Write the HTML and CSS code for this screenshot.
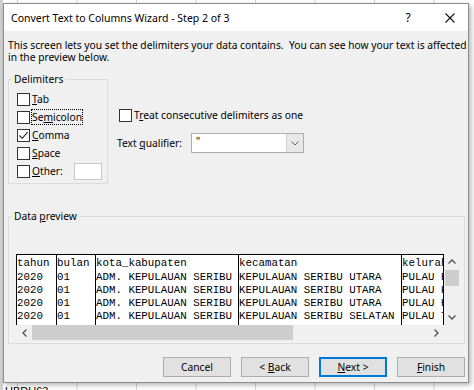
FILE: index.html
```html
<!DOCTYPE html>
<html lang="en">
<head>
  <meta charset="UTF-8" />
  <title>Convert Text to Columns Wizard - Step 2 of 3</title>
  <link rel="stylesheet" href="styles.css">
</head>
<body>
  <div class="dialog">
    <div class="titlebar">
      <span class="title">Convert Text to Columns Wizard - Step 2 of 3</span>
      <span class="help">?</span>
      <svg class="close" width="10" height="10" viewBox="0 0 10 10">
        <path d="M0.5 0.5 L9.5 9.5 M9.5 0.5 L0.5 9.5" stroke="#111" stroke-width="1.1" fill="none"/>
      </svg>
    </div>

    <div class="content">
      <p class="intro">This screen lets you set the delimiters your data contains.&nbsp; You can see how your text is affected<br>in the preview below.</p>

      <div class="options">
        <fieldset class="delims">
          <legend>Delimiters</legend>
          <div class="group-body">
            <label class="check"><span class="box"></span><span><u>T</u>ab</span></label>
            <label class="check"><span class="box"></span><span class="focus">Se<u>m</u>icolon</span></label>
            <label class="check">
              <span class="box">
                <svg width="11" height="11" viewBox="0 0 11 11"><path d="M1.5 5.5 L4.2 8.3 L9.6 2.2" stroke="#333" stroke-width="1.2" fill="none"/></svg>
              </span>
              <span><u>C</u>omma</span>
            </label>
            <label class="check"><span class="box"></span><span><u>S</u>pace</span></label>
            <label class="check"><span class="box"></span><span><u>O</u>ther:</span><span class="other-input"></span></label>
          </div>
        </fieldset>

        <div class="side">
          <label class="check treat"><span class="box"></span><span>T<u>r</u>eat consecutive delimiters as one</span></label>
          <div class="qualifier">
            <span class="qualifier-label">Text <u>q</u>ualifier:</span>
            <div class="combo">
              <span class="combo-value">"</span>
              <span class="combo-arrow">
                <svg width="8" height="5" viewBox="0 0 8 5"><path d="M0.5 0.5 L4 4 L7.5 0.5" stroke="#606060" stroke-width="1" fill="none"/></svg>
              </span>
            </div>
          </div>
        </div>
      </div>

      <fieldset class="preview-group">
        <legend>Data <u>p</u>review</legend>
        <div class="group-body preview-body">
          <div class="preview">
            <div class="grid">
              <div class="col col1">
                <div class="head">tahun</div><div>2020</div><div>2020</div><div>2020</div><div>2020</div>
              </div>
              <div class="col col2">
                <div class="head">bulan</div><div>01</div><div>01</div><div>01</div><div>01</div>
              </div>
              <div class="col col3">
                <div class="head">kota_kabupaten</div><div>ADM. KEPULAUAN SERIBU</div><div>ADM. KEPULAUAN SERIBU</div><div>ADM. KEPULAUAN SERIBU</div><div>ADM. KEPULAUAN SERIBU</div>
              </div>
              <div class="col col4">
                <div class="head">kecamatan</div><div>KEPULAUAN SERIBU UTARA</div><div>KEPULAUAN SERIBU UTARA</div><div>KEPULAUAN SERIBU UTARA</div><div>KEPULAUAN SERIBU SELATAN</div>
              </div>
              <div class="col col5">
                <div class="head">kelurahan</div><div>PULAU PANGGANG</div><div>PULAU KELAPA</div><div>PULAU HARAPAN</div><div>PULAU TIDUNG</div>
              </div>
            </div>

            <div class="vscroll">
              <span class="arrow">
                <svg width="8" height="5" viewBox="0 0 8 5"><path d="M0.5 4.5 L4 1 L7.5 4.5" stroke="#505050" stroke-width="1.3" fill="none"/></svg>
              </span>
              <span class="vthumb"></span>
              <span class="spacer"></span>
              <span class="arrow">
                <svg width="8" height="5" viewBox="0 0 8 5"><path d="M0.5 0.5 L4 4 L7.5 0.5" stroke="#505050" stroke-width="1.3" fill="none"/></svg>
              </span>
            </div>

            <div class="hscroll">
              <span class="arrow">
                <svg width="5" height="8" viewBox="0 0 5 8"><path d="M4.5 0.5 L1 4 L4.5 7.5" stroke="#505050" stroke-width="1.3" fill="none"/></svg>
              </span>
              <span class="hthumb"></span>
              <span class="spacer"></span>
              <span class="arrow">
                <svg width="5" height="8" viewBox="0 0 5 8"><path d="M0.5 0.5 L4 4 L0.5 7.5" stroke="#505050" stroke-width="1.3" fill="none"/></svg>
              </span>
            </div>
            <div class="corner"></div>
          </div>
        </div>
      </fieldset>

      <div class="buttons">
        <button class="btn">Cancel</button>
        <button class="btn">&lt; <u>B</u>ack</button>
        <button class="btn default"><u>N</u>ext &gt;</button>
        <button class="btn"><u>F</u>inish</button>
      </div>
    </div>
  </div>
  <div class="sheet-cell">HBDU63</div>
</body>
</html>
```

FILE: styles.css
```css
body {
  margin: 0;
  padding: 3px 5px 0 3px;
  height: 390px;
  box-sizing: border-box;
  overflow: hidden;
  font-family: "Noto Sans", "Open Sans", sans-serif;
  font-size: 10.25px;
  color: #000;
  background-color: #fff;
  background-image: linear-gradient(#cfcfcf, #cfcfcf), linear-gradient(90deg, #d4d4d4 1px, transparent 1px);
  background-size: 3px 100%, 59.5px 100%;
  background-position: 0 0, 17px 0;
  background-repeat: no-repeat, repeat-x;
}

/* Dialog frame */
.dialog {
  width: 466px;
  height: 380px;
  box-sizing: border-box;
  border: 1px solid #8c8c8c;
  background: #f0f0f0;
  box-shadow: 2px 2px 5px rgba(0, 0, 0, 0.3);
  display: flex;
  flex-direction: column;
}
.titlebar {
  height: 27px;
  flex: none;
  background: #fff;
  display: flex;
  align-items: center;
  padding-left: 7px;
  font-size: 10.5px;
}
.title {
  flex: 1;
}
.help {
  width: 14px;
  text-align: center;
  margin-right: 30px;
  font-size: 12px;
}
.close {
  margin-right: 13px;
}

.content {
  flex: 1;
  display: flex;
  flex-direction: column;
  padding: 0 3px 0 4px;
}
.intro {
  margin: 8px 0 0;
  line-height: 12px;
  white-space: nowrap;
}

/* Group boxes */
fieldset {
  margin: 0;
  padding: 0;
  border: 1px solid #dcdcdc;
  min-width: 0;
}
legend {
  padding: 0 2px;
  margin-left: 3px;
  line-height: 14px;
}
.options {
  display: flex;
  gap: 9px;
  margin-top: 9px;
}
.delims {
  width: 100px;
  box-sizing: border-box;
}
.group-body {
  padding: 4px 5px 3px 8px;
}

/* Checkboxes */
.check {
  display: flex;
  align-items: center;
  height: 18px;
  white-space: nowrap;
}
.box {
  width: 13px;
  height: 13px;
  box-sizing: border-box;
  border: 1px solid #333;
  background: #fff;
  margin-right: 2px;
  flex: none;
  display: flex;
  align-items: center;
  justify-content: center;
}
.focus {
  outline: 1px dotted #000;
}
.other-input {
  margin-left: auto;
  width: 28px;
  height: 17px;
  box-sizing: border-box;
  border: 1px solid #c8c8c8;
  background: #fff;
}

.side {
  padding-top: 34px;
}
.treat {
  padding-left: 2px;
}
.qualifier {
  display: flex;
  align-items: center;
  margin-top: 9px;
  height: 20px;
}
.qualifier-label {
  width: 74px;
}
.combo {
  width: 113px;
  height: 20px;
  box-sizing: border-box;
  border: 1px solid #adadad;
  background: #fff;
  display: flex;
}
.combo-value {
  padding-left: 4px;
  line-height: 14px;
}
.combo-arrow {
  margin-left: auto;
  width: 16px;
  background: #e8e8e8;
  border-left: 1px solid #d0d0d0;
  display: flex;
  align-items: center;
  justify-content: center;
}

/* Data preview */
.preview-group {
  margin-top: 25px;
}
.preview-body {
  padding: 31px 5px 3px 7px;
}
.preview {
  width: 443px;
  height: 86px;
  display: grid;
  grid-template-columns: 428px 15px;
  grid-template-rows: 71px 15px;
}
.grid {
  display: flex;
  background: #fff;
  border-top: 1px solid #000;
  border-right: 1px solid #000;
  overflow: hidden;
  font-family: "Liberation Mono", "Courier New", monospace;
  font-size: 10.8px;
}
.col {
  flex: none;
  border-left: 1px solid #000;
  padding-top: 1px;
  overflow: hidden;
}
.col div {
  line-height: 13px;
  white-space: pre;
}
.col .head {
  line-height: 15px;
}
.col1 { width: 39px; }
.col2 { width: 38px; }
.col3 { width: 142px; }
.col4 { width: 162px; }
.col5 { width: 41px; }

.vscroll,
.hscroll,
.corner {
  background: #f0f0f0;
  display: flex;
}
.vscroll {
  flex-direction: column;
  align-items: center;
}
.vscroll .arrow {
  height: 15px;
  width: 100%;
}
.hscroll .arrow {
  width: 16px;
  height: 100%;
}
.arrow {
  display: flex;
  align-items: center;
  justify-content: center;
  flex: none;
}
.spacer {
  flex: 1;
}
.vthumb {
  width: 14px;
  height: 16px;
  margin-top: 1px;
  background: #cdcdcd;
}
.hthumb {
  width: 261px;
  background: #cdcdcd;
}

/* Buttons */
.buttons {
  display: flex;
  justify-content: flex-end;
  gap: 10px;
  margin-top: 13px;
}
.btn {
  width: 68px;
  height: 20px;
  box-sizing: border-box;
  border: 1px solid #adadad;
  background: #e1e1e1;
  font: inherit;
  color: #000;
  padding: 0;
}
.btn.default {
  border: 2px solid #0078d7;
}

.sheet-cell {
  padding: 2px 0 0 2px;
  font-family: "Liberation Sans", Arial, sans-serif;
  font-size: 11px;
  line-height: 12px;
}
```
